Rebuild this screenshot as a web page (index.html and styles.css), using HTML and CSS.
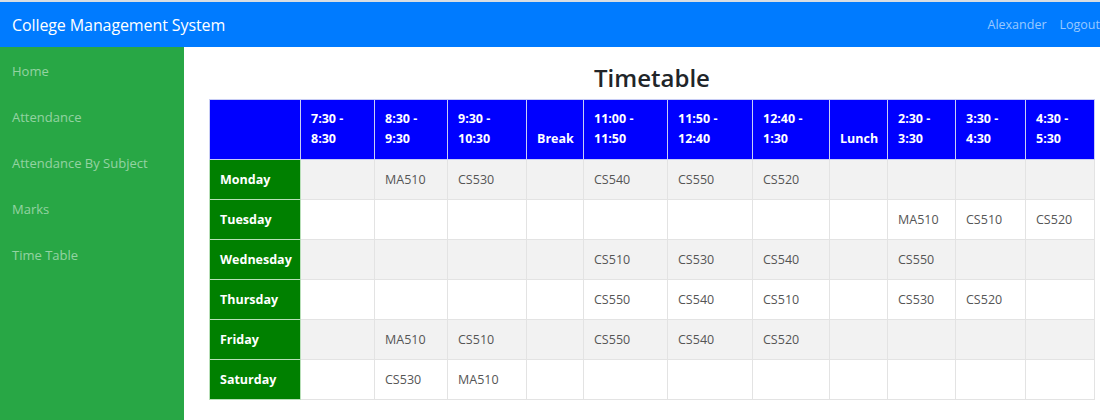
FILE: index.html
```html
<!DOCTYPE html>
<html>
<head>
<meta charset="utf-8">
<link rel="stylesheet" href="styles.css">
</head>
<body>
<header class="navbar">
  <div class="brand">College Management System</div>
  <nav class="nav-right">
    <a class="nav-link">Alexander</a>
    <a class="nav-link">Logout</a>
  </nav>
</header>
<div class="layout">
  <aside class="sidebar">
    <a class="side-link">Home</a>
    <a class="side-link">Attendance</a>
    <a class="side-link">Attendance By Subject</a>
    <a class="side-link">Marks</a>
    <a class="side-link">Time Table</a>
  </aside>
  <main class="content">
    <h1 class="title">Timetable</h1>
    <table class="tt">
      <colgroup>
        <col class="c-day"><col class="c1"><col class="c2"><col class="c3"><col class="c4"><col class="c5"><col class="c6"><col class="c7"><col class="c8"><col class="c9"><col class="c10"><col class="c11">
      </colgroup>
      <thead>
        <tr>
          <th></th>
          <th>7:30 -<br>8:30</th>
          <th>8:30 -<br>9:30</th>
          <th>9:30 -<br>10:30</th>
          <th>Break</th>
          <th>11:00 -<br>11:50</th>
          <th>11:50 -<br>12:40</th>
          <th>12:40 -<br>1:30</th>
          <th>Lunch</th>
          <th>2:30 -<br>3:30</th>
          <th>3:30 -<br>4:30</th>
          <th>4:30 -<br>5:30</th>
        </tr>
      </thead>
      <tbody>
        <tr class="odd"><th class="day">Monday</th><td></td><td>MA510</td><td>CS530</td><td></td><td>CS540</td><td>CS550</td><td>CS520</td><td></td><td></td><td></td><td></td></tr>
        <tr><th class="day">Tuesday</th><td></td><td></td><td></td><td></td><td></td><td></td><td></td><td></td><td>MA510</td><td>CS510</td><td>CS520</td></tr>
        <tr class="odd"><th class="day">Wednesday</th><td></td><td></td><td></td><td></td><td>CS510</td><td>CS530</td><td>CS540</td><td></td><td>CS550</td><td></td><td></td></tr>
        <tr><th class="day">Thursday</th><td></td><td></td><td></td><td></td><td>CS550</td><td>CS540</td><td>CS510</td><td></td><td>CS530</td><td>CS520</td><td></td></tr>
        <tr class="odd"><th class="day">Friday</th><td></td><td>MA510</td><td>CS510</td><td></td><td>CS550</td><td>CS540</td><td>CS520</td><td></td><td></td><td></td><td></td></tr>
        <tr><th class="day">Saturday</th><td></td><td>CS530</td><td>MA510</td><td></td><td></td><td></td><td></td><td></td><td></td><td></td><td></td></tr>
      </tbody>
    </table>
  </main>
</div>
</body>
</html>
```

FILE: styles.css
```css
* { box-sizing: border-box; }
html, body { margin: 0; padding: 0; }
body {
  font-family: "Open Sans", "Noto Sans", sans-serif;
  background: #fff;
  color: #212529;
  border-top: 2px solid #d8dde3;
  height: 420px;
  overflow: hidden;
}
.navbar {
  height: 45px;
  background: #007bff;
  display: flex;
  align-items: center;
  justify-content: space-between;
  padding: 0 0 0 12px;
}
.brand {
  color: #fff;
  font-size: 16px;
  letter-spacing: -0.1px;
}
.nav-right {
  display: flex;
  gap: 13px;
  margin-right: 0;
}
.nav-link {
  color: rgba(255,255,255,0.6);
  font-size: 12.5px;
}
.layout {
  display: flex;
  height: 373px;
}
.sidebar {
  width: 184px;
  flex: none;
  background: #28a745;
  display: flex;
  flex-direction: column;
  padding-top: 14px;
}
.side-link {
  color: rgba(255,255,255,0.5);
  font-size: 13px;
  height: 46px;
  padding-left: 12px;
  line-height: 20px;
}
.content {
  flex: 1;
  padding: 0 6px 0 25px;
}
.title {
  margin: 14px 0 4px;
  text-align: center;
  font-size: 24px;
  font-weight: 600;
  line-height: 34px;
  color: #212529;
}
.tt {
  border-collapse: collapse;
  table-layout: fixed;
  width: 885px;
  font-size: 12.5px;
}
.c-day { width: 91px; }
.c1 { width: 74px; }
.c2 { width: 73px; }
.c3 { width: 79px; }
.c4 { width: 57px; }
.c5 { width: 84px; }
.c6 { width: 85px; }
.c7 { width: 77px; }
.c8 { width: 58px; }
.c9 { width: 68px; }
.c10 { width: 70px; }
.c11 { width: 69px; }
.tt thead th {
  background: #0000ff;
  color: #fff;
  font-weight: 700;
  text-align: left;
  vertical-align: bottom;
  height: 60px;
  padding: 9px 10px 10px;
  line-height: 20px;
  border: 1px solid #c8cdf5;
}
.tt tbody tr { height: 40px; }
.tt tbody td {
  padding: 0 10px;
  color: #555;
  border: 1px solid #e3e3e3;
  vertical-align: middle;
  line-height: 20px;
}
.tt tbody tr.odd td { background: #f2f2f2; }
.tt tbody th.day {
  background: #008000;
  color: #fff;
  font-weight: 700;
  text-align: left;
  padding: 0 10px;
  border: 1px solid #b9e0b9;
  line-height: 20px;
}
```
